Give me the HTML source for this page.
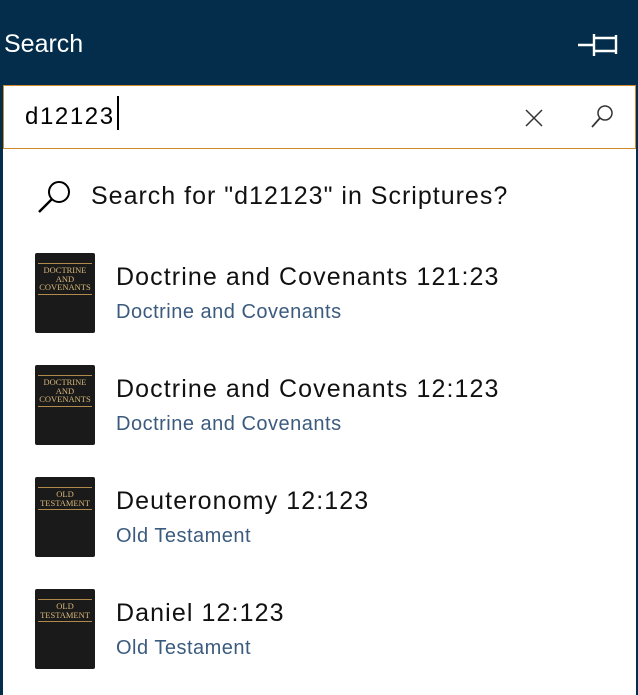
<html><head><style>
body{margin:0;width:638px;height:695px;background:#032d4a;font-family:"Liberation Sans",sans-serif;position:relative;overflow:hidden}
.t{position:absolute;left:4px;top:30px;color:#fff;font-size:25px}
.box{position:absolute;left:3px;top:85px;width:631px;height:62px;background:#fff;border:1px solid #d08a2e}
.panel{position:absolute;left:3px;top:149px;width:633px;height:546px;background:#fff}
.q{position:absolute;left:21px;top:17px;font-size:24px;color:#000;letter-spacing:1.6px}
.cur{position:absolute;left:113px;top:10px;width:2px;height:34px;background:#000}
.book{position:absolute;left:32px;width:60px;height:80px;background:#1a1a1a;border-radius:2px}
.book div{position:absolute;left:3px;right:3px;top:10px;border-top:1px solid #b08a4a;border-bottom:1px solid #b08a4a;color:#d8b878;font-family:"Liberation Serif",serif;font-size:8.5px;text-align:center;line-height:8.5px;padding:2px 0}
.h{position:absolute;left:113px;font-size:25px;color:#111;letter-spacing:1.1px}
.s{position:absolute;left:113px;font-size:20px;color:#3b5b7e;letter-spacing:0.5px}
</style></head><body>
<div class="t">Search</div>
<svg style="position:absolute;left:576px;top:31px" width="44" height="28"><path d="M2 14H18M18 3V25M18 7H40V20H18M40 4V23" stroke="#fff" stroke-width="2.4" fill="none"/></svg>
<div class="box"><div class="q">d12123</div><div class="cur"></div>
<svg style="position:absolute;left:520px;top:22px" width="20" height="20"><path d="M2 2L18 18M18 2L2 18" stroke="#333" stroke-width="1.5"/></svg>
<svg style="position:absolute;left:585px;top:18px" width="26" height="26"><circle cx="16" cy="9" r="7" stroke="#333" stroke-width="1.5" fill="none"/><path d="M11 14L3 23" stroke="#333" stroke-width="1.7"/></svg>
</div>
<div class="panel">
<svg style="position:absolute;left:32px;top:30px" width="38" height="36"><circle cx="24" cy="13" r="10" stroke="#000" stroke-width="2" fill="none"/><path d="M17 20L4 33" stroke="#000" stroke-width="2.4"/></svg>
<div style="position:absolute;left:88px;top:33px;font-size:25px;color:#111;letter-spacing:1px">Search for "d12123" in Scriptures?</div>
<div class="book" style="top:104px"><div>DOCTRINE<br>AND<br>COVENANTS</div></div>
<div class="h" style="top:114px">Doctrine and Covenants 121:23</div><div class="s" style="top:152px">Doctrine and Covenants</div>
<div class="book" style="top:216px"><div>DOCTRINE<br>AND<br>COVENANTS</div></div>
<div class="h" style="top:226px">Doctrine and Covenants 12:123</div><div class="s" style="top:264px">Doctrine and Covenants</div>
<div class="book" style="top:328px"><div>OLD<br>TESTAMENT</div></div>
<div class="h" style="top:338px">Deuteronomy 12:123</div><div class="s" style="top:376px">Old Testament</div>
<div class="book" style="top:440px"><div>OLD<br>TESTAMENT</div></div>
<div class="h" style="top:450px">Daniel 12:123</div><div class="s" style="top:488px">Old Testament</div>
</div>
</body></html>
